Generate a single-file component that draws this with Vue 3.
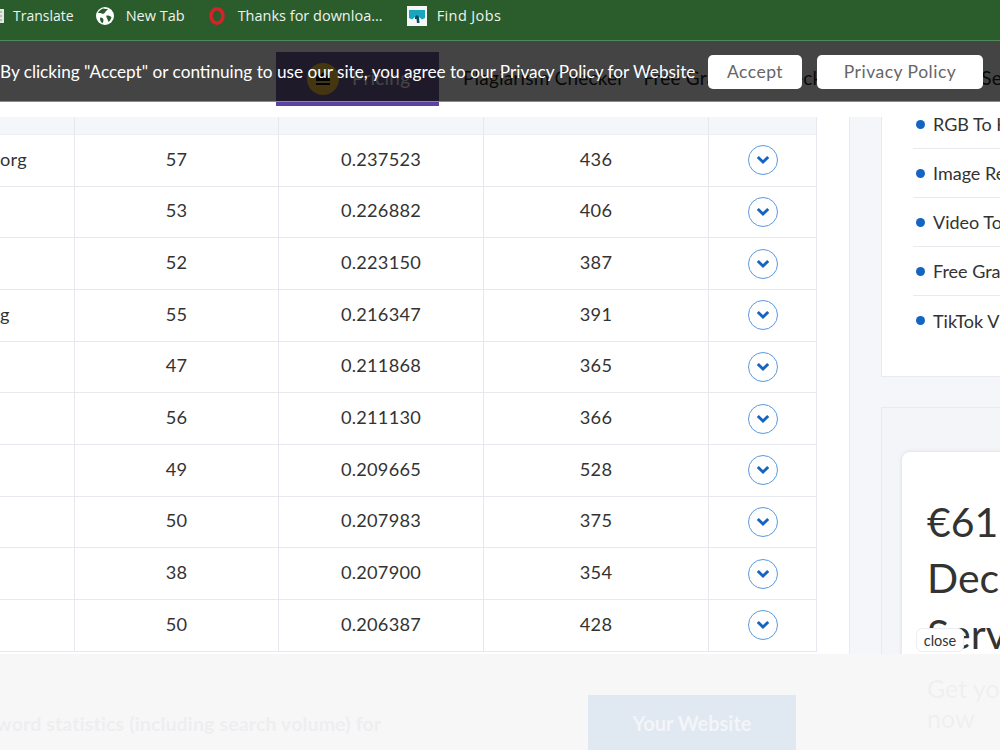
<script setup>
const rows = [
  ['org', 57, '0.237523', 436],
  ['', 53, '0.226882', 406],
  ['', 52, '0.223150', 387],
  ['g', 55, '0.216347', 391],
  ['', 47, '0.211868', 365],
  ['', 56, '0.211130', 366],
  ['', 49, '0.209665', 528],
  ['', 50, '0.207983', 375],
  ['', 38, '0.207900', 354],
  ['', 50, '0.206387', 428],
]
const tools = ['RGB To Hex', 'Image Resizer', 'Video To MP3', 'Free Grammar Checker', 'TikTok Video Downloader']
</script>

<template>
  <div class="screen">
    <header class="bookmarks">
      <div class="mark first">
        <svg class="doc" width="10" height="20" viewBox="0 0 10 20"><path d="M0 3h10v14H0z" fill="#e4e7e4"/><path d="M0 6h8M0 10h8M0 14h8" stroke="#8a958c" stroke-width="1"/></svg>
        <span>Translate</span>
      </div>
      <div class="mark">
        <svg width="18" height="18" viewBox="0 0 18 18"><circle cx="9" cy="9" r="9" fill="#fff"/><path d="M7 1.500c2 .8 3.600.2 5 .6-1 1.600-2.300 2-3 3.300-.7 1.300-2.300 1.600-3.400 1-1-.6-2.600-.4-3.800-.4C3 4 5 2.200 7 1.500zM10.500 8.500c1.500-.4 3.500.2 5 1.500-.3 1.800-1.200 3.600-2.500 4.600-1 .4-1.200-1.400-1.500-2.400-.4-1.200-1.800-2.700-1-3.700zM5 10.500c1.200.2 2.500 1.300 2.500 2.500 0 1.200-.6 2.300-.9 3.200C5 15.500 3.800 13 4 11.500c.1-.7.400-1 1-1z" fill="#2a5d2b"/></svg>
        <span>New Tab</span>
      </div>
      <div class="mark thanks">
        <svg width="16" height="18" viewBox="0 0 16 18"><ellipse cx="8" cy="9" rx="6" ry="7.200" fill="none" stroke="#d3232b" stroke-width="3.600"/></svg>
        <span>Thanks for downloa...</span>
      </div>
      <div class="mark jobs">
        <svg width="20" height="20" viewBox="0 0 20 20"><path d="M0 0h20v20H0z" fill="#f4f7f6"/><path d="M2 4h16v8l-3 1.500-3-2.500-2 .5-2-.5-3 2.500L2 12z" fill="#18a5bd"/><path d="M8 11l2-2 2 2 .5 6H10l-.5-4H8z" fill="#0c4f60"/></svg>
        <span>Find Jobs</span>
      </div>
    </header>

    <nav class="topnav">
      <div class="tab">
        <span class="badge">
          <svg width="16" height="14" viewBox="0 0 16 14"><path d="M1 1l3.500 3L8 0l3.500 4L15 1v8H1z" fill="#111"/><path d="M1 11h14v2H1z" fill="#111"/></svg>
        </span>
        <span>Pricing</span>
      </div>
      <span class="link plag">Plagiarism Checker</span>
      <span class="link">Free Grammar Checker</span>
      <span class="link services">Services</span>
    </nav>

    <div class="content">
      <main class="main">
        <div class="table">
          <div class="thead">
            <span class="th c1"></span><span class="th c2"></span><span class="th c3"></span><span class="th c4"></span><span class="th c5"></span>
          </div>
          <div v-for="(r, i) in rows" :key="i" class="row">
            <span class="td c1 name">{{ r[0] }}</span>
            <span class="td c2">{{ r[1] }}</span>
            <span class="td c3">{{ r[2] }}</span>
            <span class="td c4">{{ r[3] }}</span>
            <span class="td c5">
              <span class="expand">
                <svg width="14" height="10" viewBox="0 0 14 10"><path d="M1.800 2l5.200 5 5.200-5" fill="none" stroke="#1565c0" stroke-width="3"/></svg>
              </span>
            </span>
          </div>
        </div>
      </main>

      <aside class="side">
        <section class="tools">
          <ul class="list">
            <li v-for="t in tools" :key="t" class="tool"><i class="dot"></i>{{ t }}</li>
          </ul>
        </section>
        <section class="promo">
          <div class="offer">
            <h2>€61<br>Dec<br>Servers</h2>
            <p>Get your<br>now</p>
          </div>
        </section>
      </aside>
    </div>

    <div class="cookie">
      <span class="cookie-text">By clicking "Accept" or continuing to use our site, you agree to our Privacy Policy for Website</span>
      <button class="btn accept">Accept</button>
      <button class="btn policy">Privacy Policy</button>
    </div>

    <div class="sticky">
      <span class="sticky-text">word statistics (including search volume) for</span>
      <span class="sticky-btn">Your Website</span>
    </div>
    <span class="close">close</span>
  </div>
</template>

<style>
html, body { margin: 0; }
</style>

<style scoped>
.screen {
  position: relative;
  width: 1000px;
  height: 750px;
  overflow: hidden;
  background: #fff;
  font-family: "Lato", "Noto Sans", sans-serif;
  color: #333;
}
.bookmarks {
  display: flex;
  align-items: center;
  gap: 24px;
  box-sizing: border-box;
  height: 41px;
  padding-bottom: 9px;
  background: #2a5d2b;
  border-bottom: 1px solid #4b8a57;
  color: #eef3ee;
  font: 14.500px "Open Sans", sans-serif;
}
.mark { display: flex; align-items: center; gap: 12px; white-space: nowrap; }
.mark svg { flex: none; }
.first { margin-left: -6px; margin-right: -2px; gap: 9px; font-size: 14px; }
.thanks { gap: 13px; }
.jobs { gap: 10px; letter-spacing: 0.400px; }
.topnav {
  display: flex;
  align-items: flex-start;
  height: 76px;
  padding-left: 276px;
  font-size: 19px;
  letter-spacing: 0.200px;
  color: #222;
  white-space: nowrap;
}
.tab {
  display: flex;
  flex: none;
  align-items: center;
  gap: 13px;
  box-sizing: border-box;
  width: 163px;
  height: 54px;
  margin-top: 11px;
  padding-left: 31px;
  background: #74639f;
  border-bottom: 4px solid #5c43a3;
  color: #fff;
}
.badge {
  display: flex;
  align-items: center;
  justify-content: center;
  width: 32px;
  height: 32px;
  border-radius: 50%;
  background: #ffc93e;
  flex: none;
  margin-top: 3px;
}
.link { flex: none; margin-top: 25px; margin-left: 19px; line-height: 24px; }
.plag { margin-left: 24px; }
.services { margin-left: 142px; }
.content { display: flex; align-items: stretch; height: 633px; background: #f5f6fa; }
.main { flex: none; width: 849px; background: #fff; border-right: 1px solid #e8eaf0; }
.table { width: 817px; font-size: 18.200px; letter-spacing: 0.250px; color: #333; }
.thead, .row { display: flex; }
.thead { height: 18px; background: #f5f6fa; border-bottom: 1px solid #eceef3; box-sizing: border-box; }
.row { height: 51.670px; box-sizing: border-box; border-bottom: 1px solid #e6e8ee; }
.th, .td { box-sizing: border-box; border-right: 1px solid #e6e8f0; }
.td { display: flex; align-items: center; justify-content: center; padding-bottom: 3px; }
.c1 { width: 75px; }
.c2 { width: 204px; }
.c3 { width: 205px; }
.c4 { width: 225px; }
.c5 { width: 108px; padding-bottom: 0; }
.name { justify-content: flex-start; }
.expand {
  display: flex;
  align-items: center;
  justify-content: center;
  box-sizing: border-box;
  width: 30px;
  height: 30px;
  border: 1.500px solid #5a9ade;
  border-radius: 50%;
}
.side { flex: none; width: 180px; margin-left: 31px; white-space: nowrap; }
.tools {
  box-sizing: border-box;
  height: 260px;
  overflow: hidden;
  background: #fff;
  border-left: 1px solid #e8eaf0;
  border-bottom: 1px solid #e8eaf0;
}
.list { list-style: none; margin: -17px 0 0; padding: 0 0 0 31px; font-size: 18px; color: #333; }
.tool {
  display: flex;
  align-items: center;
  gap: 8px;
  box-sizing: border-box;
  height: 49px;
  border-bottom: 1px solid #e8eaf0;
}
.tool:last-child { border-bottom: 0; }
.dot { width: 9px; height: 9px; margin-left: 3px; border-radius: 50%; background: #1565c0; flex: none; }
.promo {
  box-sizing: border-box;
  height: 343px;
  margin-top: 30px;
  padding: 44px 0 0 20px;
  background: #f4f5f8;
  border-left: 1px solid #e8eaf0;
  border-top: 1px solid #e8eaf0;
}
.offer {
  box-sizing: border-box;
  width: 400px;
  height: 320px;
  padding: 42px 0 0 25px;
  background: #fff;
  border-radius: 8px;
  box-shadow: 0 0 4px rgba(0, 0, 0, 0.12);
}
.offer h2 { margin: 0; font: 400 41px/56px "Lato", sans-serif; color: #333; }
.offer p { margin: 11px 0 0; font: 400 25px/30px "Lato", sans-serif; color: #333; }
.cookie {
  position: absolute;
  top: 41px;
  left: 0;
  right: 0;
  display: flex;
  align-items: center;
  box-sizing: border-box;
  height: 61px;
  background: rgba(0, 0, 0, 0.733);
  border-bottom: 1px solid #8a8a8a;
  color: #fff;
  white-space: nowrap;
}
.cookie-text { width: 708px; font-size: 17.200px; flex: none; }
.btn {
  box-sizing: border-box;
  height: 34px;
  margin-top: 1px;
  padding: 0;
  border: 0;
  border-radius: 5px;
  background: #fff;
  color: #666;
  font: 17.500px "Lato", sans-serif;
  letter-spacing: 0.500px;
}
.accept { width: 94px; }
.policy { width: 166px; margin-left: 15px; }
.sticky {
  position: absolute;
  left: 0;
  right: 0;
  bottom: 0;
  height: 96px;
  background: rgba(247, 247, 248, 0.96);
  color: #eeeef0;
}
.sticky-text { position: absolute; left: -4px; top: 58px; font-size: 19.500px; letter-spacing: 0.150px; font-weight: 700; white-space: nowrap; }
.sticky-btn {
  position: absolute;
  left: 588px;
  top: 41px;
  width: 208px;
  height: 55px;
  display: flex;
  align-items: center;
  justify-content: center;
  background: #e0e8f1;
  color: #f3f5f8;
  font-size: 20px;
  font-weight: 700;
}
.close {
  position: absolute;
  left: 916px;
  top: 628px;
  box-sizing: border-box;
  width: 48px;
  height: 24px;
  display: flex;
  align-items: center;
  justify-content: center;
  background: #fff;
  border: 1px solid #eeeeee;
  border-radius: 6px;
  color: #333;
  font-size: 14.500px;
}
</style>
